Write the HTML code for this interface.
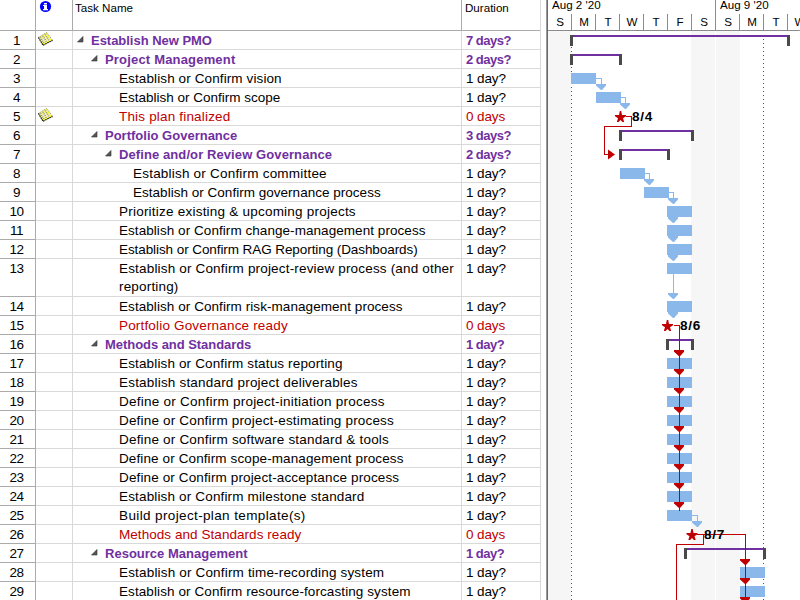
<!DOCTYPE html><html><head><meta charset="utf-8"><style>
html,body{margin:0;padding:0;width:800px;height:600px;overflow:hidden;background:#fff;}
body{position:relative;font-family:"Liberation Sans",sans-serif;color:#000;}
.a{position:absolute;}
.t{position:absolute;white-space:nowrap;font-size:13.5px;letter-spacing:0.2px;line-height:18px;}
.b{font-weight:bold;font-size:13.0px;letter-spacing:0.1px;color:#7030a0;}
.r{color:#c00000;}
</style></head><body>
<div class="a" style="left:0;top:30px;width:541px;height:1px;background:#ababab"></div>
<div class="a" style="left:0;top:49px;width:35px;height:1px;background:#ababab"></div>
<div class="a" style="left:36px;top:49px;width:505px;height:1px;background:#d9d9d9"></div>
<div class="a" style="left:0;top:68px;width:35px;height:1px;background:#ababab"></div>
<div class="a" style="left:36px;top:68px;width:505px;height:1px;background:#d9d9d9"></div>
<div class="a" style="left:0;top:87px;width:35px;height:1px;background:#ababab"></div>
<div class="a" style="left:36px;top:87px;width:505px;height:1px;background:#d9d9d9"></div>
<div class="a" style="left:0;top:106px;width:35px;height:1px;background:#ababab"></div>
<div class="a" style="left:36px;top:106px;width:505px;height:1px;background:#d9d9d9"></div>
<div class="a" style="left:0;top:125px;width:35px;height:1px;background:#ababab"></div>
<div class="a" style="left:36px;top:125px;width:505px;height:1px;background:#d9d9d9"></div>
<div class="a" style="left:0;top:144px;width:35px;height:1px;background:#ababab"></div>
<div class="a" style="left:36px;top:144px;width:505px;height:1px;background:#d9d9d9"></div>
<div class="a" style="left:0;top:163px;width:35px;height:1px;background:#ababab"></div>
<div class="a" style="left:36px;top:163px;width:505px;height:1px;background:#d9d9d9"></div>
<div class="a" style="left:0;top:182px;width:35px;height:1px;background:#ababab"></div>
<div class="a" style="left:36px;top:182px;width:505px;height:1px;background:#d9d9d9"></div>
<div class="a" style="left:0;top:201px;width:35px;height:1px;background:#ababab"></div>
<div class="a" style="left:36px;top:201px;width:505px;height:1px;background:#d9d9d9"></div>
<div class="a" style="left:0;top:220px;width:35px;height:1px;background:#ababab"></div>
<div class="a" style="left:36px;top:220px;width:505px;height:1px;background:#d9d9d9"></div>
<div class="a" style="left:0;top:239px;width:35px;height:1px;background:#ababab"></div>
<div class="a" style="left:36px;top:239px;width:505px;height:1px;background:#d9d9d9"></div>
<div class="a" style="left:0;top:258px;width:35px;height:1px;background:#ababab"></div>
<div class="a" style="left:36px;top:258px;width:505px;height:1px;background:#d9d9d9"></div>
<div class="a" style="left:0;top:296px;width:35px;height:1px;background:#ababab"></div>
<div class="a" style="left:36px;top:296px;width:505px;height:1px;background:#d9d9d9"></div>
<div class="a" style="left:0;top:315px;width:35px;height:1px;background:#ababab"></div>
<div class="a" style="left:36px;top:315px;width:505px;height:1px;background:#d9d9d9"></div>
<div class="a" style="left:0;top:334px;width:35px;height:1px;background:#ababab"></div>
<div class="a" style="left:36px;top:334px;width:505px;height:1px;background:#d9d9d9"></div>
<div class="a" style="left:0;top:353px;width:35px;height:1px;background:#ababab"></div>
<div class="a" style="left:36px;top:353px;width:505px;height:1px;background:#d9d9d9"></div>
<div class="a" style="left:0;top:372px;width:35px;height:1px;background:#ababab"></div>
<div class="a" style="left:36px;top:372px;width:505px;height:1px;background:#d9d9d9"></div>
<div class="a" style="left:0;top:391px;width:35px;height:1px;background:#ababab"></div>
<div class="a" style="left:36px;top:391px;width:505px;height:1px;background:#d9d9d9"></div>
<div class="a" style="left:0;top:410px;width:35px;height:1px;background:#ababab"></div>
<div class="a" style="left:36px;top:410px;width:505px;height:1px;background:#d9d9d9"></div>
<div class="a" style="left:0;top:429px;width:35px;height:1px;background:#ababab"></div>
<div class="a" style="left:36px;top:429px;width:505px;height:1px;background:#d9d9d9"></div>
<div class="a" style="left:0;top:448px;width:35px;height:1px;background:#ababab"></div>
<div class="a" style="left:36px;top:448px;width:505px;height:1px;background:#d9d9d9"></div>
<div class="a" style="left:0;top:467px;width:35px;height:1px;background:#ababab"></div>
<div class="a" style="left:36px;top:467px;width:505px;height:1px;background:#d9d9d9"></div>
<div class="a" style="left:0;top:486px;width:35px;height:1px;background:#ababab"></div>
<div class="a" style="left:36px;top:486px;width:505px;height:1px;background:#d9d9d9"></div>
<div class="a" style="left:0;top:505px;width:35px;height:1px;background:#ababab"></div>
<div class="a" style="left:36px;top:505px;width:505px;height:1px;background:#d9d9d9"></div>
<div class="a" style="left:0;top:524px;width:35px;height:1px;background:#ababab"></div>
<div class="a" style="left:36px;top:524px;width:505px;height:1px;background:#d9d9d9"></div>
<div class="a" style="left:0;top:543px;width:35px;height:1px;background:#ababab"></div>
<div class="a" style="left:36px;top:543px;width:505px;height:1px;background:#d9d9d9"></div>
<div class="a" style="left:0;top:562px;width:35px;height:1px;background:#ababab"></div>
<div class="a" style="left:36px;top:562px;width:505px;height:1px;background:#d9d9d9"></div>
<div class="a" style="left:0;top:581px;width:35px;height:1px;background:#ababab"></div>
<div class="a" style="left:36px;top:581px;width:505px;height:1px;background:#d9d9d9"></div>
<div class="a" style="left:0;top:600px;width:35px;height:1px;background:#ababab"></div>
<div class="a" style="left:36px;top:600px;width:505px;height:1px;background:#d9d9d9"></div>
<div class="a" style="left:35px;top:0;width:1px;height:600px;background:#ababab"></div>
<div class="a" style="left:72px;top:0;width:1px;height:30px;background:#ababab"></div>
<div class="a" style="left:72px;top:31px;width:1px;height:569px;background:#d9d9d9"></div>
<div class="a" style="left:461px;top:0;width:1px;height:30px;background:#ababab"></div>
<div class="a" style="left:461px;top:31px;width:1px;height:569px;background:#d9d9d9"></div>
<div class="a" style="left:540px;top:0;width:1px;height:600px;background:#d9d9d9"></div>
<div class="a" style="left:546px;top:0;width:1px;height:600px;background:#9a9a9a"></div><div class="a" style="left:547px;top:0;width:1px;height:600px;background:#6a6a6a"></div>
<div class="t" style="left:75px;top:-1px;font-size:11.6px;letter-spacing:0">Task Name</div>
<div class="t" style="left:465px;top:-1px;font-size:11.6px;letter-spacing:0">Duration</div>
<svg class="a" style="left:38px;top:0" width="16" height="14" viewBox="0 0 16 14"><circle cx="7.5" cy="6.5" r="5.6" fill="#0000ff"/><rect x="6" y="3" width="3" height="1.5" fill="#fff"/><rect x="6" y="5" width="3" height="4.5" fill="#fff"/><rect x="5" y="5" width="1" height="1" fill="#fff"/><rect x="5" y="9" width="5" height="1.3" fill="#fff"/></svg>
<div class="t" style="left:-1px;width:35px;text-align:center;top:32px;letter-spacing:-0.6px">1</div>
<svg class="a" style="left:36px;top:32px" width="20" height="18" viewBox="0 0 20 18"><g transform="matrix(8.400,-4.900,4.600,7.800,2.4,5.4)"><rect x="0" y="0" width="1" height="1" fill="#ffff00"/><rect x="0.060" y="0.070" width="0.26" height="0.17" fill="#ffffff"/><rect x="0.100" y="0.100" width="0.18" height="0.11" fill="#8c8c8c"/><rect x="0.060" y="0.285" width="0.26" height="0.17" fill="#ffffff"/><rect x="0.100" y="0.315" width="0.18" height="0.11" fill="#8c8c8c"/><rect x="0.060" y="0.500" width="0.26" height="0.17" fill="#ffffff"/><rect x="0.100" y="0.530" width="0.18" height="0.11" fill="#8c8c8c"/><rect x="0.060" y="0.715" width="0.26" height="0.17" fill="#ffffff"/><rect x="0.100" y="0.745" width="0.18" height="0.11" fill="#8c8c8c"/><rect x="0.350" y="0.070" width="0.26" height="0.17" fill="#ffffff"/><rect x="0.390" y="0.100" width="0.18" height="0.11" fill="#8c8c8c"/><rect x="0.350" y="0.285" width="0.26" height="0.17" fill="#ffffff"/><rect x="0.390" y="0.315" width="0.18" height="0.11" fill="#8c8c8c"/><rect x="0.350" y="0.500" width="0.26" height="0.17" fill="#ffffff"/><rect x="0.390" y="0.530" width="0.18" height="0.11" fill="#8c8c8c"/><rect x="0.350" y="0.715" width="0.26" height="0.17" fill="#ffffff"/><rect x="0.390" y="0.745" width="0.18" height="0.11" fill="#8c8c8c"/><rect x="0.640" y="0.070" width="0.26" height="0.17" fill="#ffffff"/><rect x="0.680" y="0.100" width="0.18" height="0.11" fill="#8c8c8c"/><rect x="0.640" y="0.285" width="0.26" height="0.17" fill="#ffffff"/><rect x="0.680" y="0.315" width="0.18" height="0.11" fill="#8c8c8c"/><rect x="0.640" y="0.500" width="0.26" height="0.17" fill="#ffffff"/><rect x="0.680" y="0.530" width="0.18" height="0.11" fill="#8c8c8c"/><rect x="0.640" y="0.715" width="0.26" height="0.17" fill="#ffffff"/><rect x="0.680" y="0.745" width="0.18" height="0.11" fill="#8c8c8c"/></g><polyline points="2.4,5.4 7.0,13.2 16.6,8.4" fill="none" stroke="#000" stroke-width="1.1" stroke-dasharray="1.6 0.7"/><polyline points="2.4,5.4 10.8,0.5 16.6,8.4" fill="none" stroke="#777" stroke-width="0.8" stroke-dasharray="1.3 0.9"/></svg>
<svg class="a" style="left:77px;top:35.5px" width="7" height="7" viewBox="0 0 7 7"><polygon points="6,0.5 6,6 0.5,6" fill="#555" stroke="#333" stroke-width="0.6"/></svg>
<div class="t b" style="left:91px;top:32px;letter-spacing:-0.025px">Establish New PMO</div>
<div class="t b" style="left:466px;top:32px;letter-spacing:-0.5px">7 days?</div>
<div class="t" style="left:-1px;width:35px;text-align:center;top:51px;letter-spacing:-0.6px">2</div>
<svg class="a" style="left:91px;top:54.5px" width="7" height="7" viewBox="0 0 7 7"><polygon points="6,0.5 6,6 0.5,6" fill="#555" stroke="#333" stroke-width="0.6"/></svg>
<div class="t b" style="left:105px;top:51px;letter-spacing:0.182px">Project Management</div>
<div class="t b" style="left:466px;top:51px;letter-spacing:-0.5px">2 days?</div>
<div class="t" style="left:-1px;width:35px;text-align:center;top:70px;letter-spacing:-0.6px">3</div>
<div class="t" style="left:119px;top:70px;letter-spacing:0.108px">Establish or Confirm vision</div>
<div class="t" style="left:466px;top:70px;letter-spacing:-0.1px">1 day?</div>
<div class="t" style="left:-1px;width:35px;text-align:center;top:89px;letter-spacing:-0.6px">4</div>
<div class="t" style="left:119px;top:89px;letter-spacing:-0.004px">Establish or Confirm scope</div>
<div class="t" style="left:466px;top:89px;letter-spacing:-0.1px">1 day?</div>
<div class="t" style="left:-1px;width:35px;text-align:center;top:108px;letter-spacing:-0.6px">5</div>
<svg class="a" style="left:36px;top:108px" width="20" height="18" viewBox="0 0 20 18"><g transform="matrix(8.400,-4.900,4.600,7.800,2.4,5.4)"><rect x="0" y="0" width="1" height="1" fill="#ffff00"/><rect x="0.060" y="0.070" width="0.26" height="0.17" fill="#ffffff"/><rect x="0.100" y="0.100" width="0.18" height="0.11" fill="#8c8c8c"/><rect x="0.060" y="0.285" width="0.26" height="0.17" fill="#ffffff"/><rect x="0.100" y="0.315" width="0.18" height="0.11" fill="#8c8c8c"/><rect x="0.060" y="0.500" width="0.26" height="0.17" fill="#ffffff"/><rect x="0.100" y="0.530" width="0.18" height="0.11" fill="#8c8c8c"/><rect x="0.060" y="0.715" width="0.26" height="0.17" fill="#ffffff"/><rect x="0.100" y="0.745" width="0.18" height="0.11" fill="#8c8c8c"/><rect x="0.350" y="0.070" width="0.26" height="0.17" fill="#ffffff"/><rect x="0.390" y="0.100" width="0.18" height="0.11" fill="#8c8c8c"/><rect x="0.350" y="0.285" width="0.26" height="0.17" fill="#ffffff"/><rect x="0.390" y="0.315" width="0.18" height="0.11" fill="#8c8c8c"/><rect x="0.350" y="0.500" width="0.26" height="0.17" fill="#ffffff"/><rect x="0.390" y="0.530" width="0.18" height="0.11" fill="#8c8c8c"/><rect x="0.350" y="0.715" width="0.26" height="0.17" fill="#ffffff"/><rect x="0.390" y="0.745" width="0.18" height="0.11" fill="#8c8c8c"/><rect x="0.640" y="0.070" width="0.26" height="0.17" fill="#ffffff"/><rect x="0.680" y="0.100" width="0.18" height="0.11" fill="#8c8c8c"/><rect x="0.640" y="0.285" width="0.26" height="0.17" fill="#ffffff"/><rect x="0.680" y="0.315" width="0.18" height="0.11" fill="#8c8c8c"/><rect x="0.640" y="0.500" width="0.26" height="0.17" fill="#ffffff"/><rect x="0.680" y="0.530" width="0.18" height="0.11" fill="#8c8c8c"/><rect x="0.640" y="0.715" width="0.26" height="0.17" fill="#ffffff"/><rect x="0.680" y="0.745" width="0.18" height="0.11" fill="#8c8c8c"/></g><polyline points="2.4,5.4 7.0,13.2 16.6,8.4" fill="none" stroke="#000" stroke-width="1.1" stroke-dasharray="1.6 0.7"/><polyline points="2.4,5.4 10.8,0.5 16.6,8.4" fill="none" stroke="#777" stroke-width="0.8" stroke-dasharray="1.3 0.9"/></svg>
<div class="t r" style="left:119px;top:108px;letter-spacing:0.178px">This plan finalized</div>
<div class="t r" style="left:466px;top:108px;letter-spacing:-0.1px">0 days</div>
<div class="t" style="left:-1px;width:35px;text-align:center;top:127px;letter-spacing:-0.6px">6</div>
<svg class="a" style="left:91px;top:130.5px" width="7" height="7" viewBox="0 0 7 7"><polygon points="6,0.5 6,6 0.5,6" fill="#555" stroke="#333" stroke-width="0.6"/></svg>
<div class="t b" style="left:105px;top:127px;letter-spacing:0.005px">Portfolio Governance</div>
<div class="t b" style="left:466px;top:127px;letter-spacing:-0.5px">3 days?</div>
<div class="t" style="left:-1px;width:35px;text-align:center;top:146px;letter-spacing:-0.6px">7</div>
<svg class="a" style="left:105px;top:149.5px" width="7" height="7" viewBox="0 0 7 7"><polygon points="6,0.5 6,6 0.5,6" fill="#555" stroke="#333" stroke-width="0.6"/></svg>
<div class="t b" style="left:119px;top:146px;letter-spacing:0.094px">Define and/or Review Governance</div>
<div class="t b" style="left:466px;top:146px;letter-spacing:-0.5px">2 days?</div>
<div class="t" style="left:-1px;width:35px;text-align:center;top:165px;letter-spacing:-0.6px">8</div>
<div class="t" style="left:133px;top:165px;letter-spacing:0.209px">Establish or Confirm committee</div>
<div class="t" style="left:466px;top:165px;letter-spacing:-0.1px">1 day?</div>
<div class="t" style="left:-1px;width:35px;text-align:center;top:184px;letter-spacing:-0.6px">9</div>
<div class="t" style="left:133px;top:184px;letter-spacing:0.021px">Establish or Confirm governance process</div>
<div class="t" style="left:466px;top:184px;letter-spacing:-0.1px">1 day?</div>
<div class="t" style="left:-1px;width:35px;text-align:center;top:203px;letter-spacing:-0.6px">10</div>
<div class="t" style="left:119px;top:203px;letter-spacing:0.224px">Prioritize existing &amp; upcoming projects</div>
<div class="t" style="left:466px;top:203px;letter-spacing:-0.1px">1 day?</div>
<div class="t" style="left:-1px;width:35px;text-align:center;top:222px;letter-spacing:-0.6px">11</div>
<div class="t" style="left:119px;top:222px;letter-spacing:0.057px">Establish or Confirm change-management process</div>
<div class="t" style="left:466px;top:222px;letter-spacing:-0.1px">1 day?</div>
<div class="t" style="left:-1px;width:35px;text-align:center;top:241px;letter-spacing:-0.6px">12</div>
<div class="t" style="left:119px;top:241px;letter-spacing:-0.081px">Establish or Confirm RAG Reporting (Dashboards)</div>
<div class="t" style="left:466px;top:241px;letter-spacing:-0.1px">1 day?</div>
<div class="t" style="left:-1px;width:35px;text-align:center;top:260px;letter-spacing:-0.6px">13</div>
<div class="t" style="left:119px;top:260px;letter-spacing:0.172px">Establish or Confirm project-review process (and other<br>reporting)</div>
<div class="t" style="left:466px;top:260px;letter-spacing:-0.1px">1 day?</div>
<div class="t" style="left:-1px;width:35px;text-align:center;top:298px;letter-spacing:-0.6px">14</div>
<div class="t" style="left:119px;top:298px;letter-spacing:0.067px">Establish or Confirm risk-management process</div>
<div class="t" style="left:466px;top:298px;letter-spacing:-0.1px">1 day?</div>
<div class="t" style="left:-1px;width:35px;text-align:center;top:317px;letter-spacing:-0.6px">15</div>
<div class="t r" style="left:119px;top:317px;letter-spacing:0.172px">Portfolio Governance ready</div>
<div class="t r" style="left:466px;top:317px;letter-spacing:-0.1px">0 days</div>
<div class="t" style="left:-1px;width:35px;text-align:center;top:336px;letter-spacing:-0.6px">16</div>
<svg class="a" style="left:91px;top:339.5px" width="7" height="7" viewBox="0 0 7 7"><polygon points="6,0.5 6,6 0.5,6" fill="#555" stroke="#333" stroke-width="0.6"/></svg>
<div class="t b" style="left:105px;top:336px;letter-spacing:-0.050px">Methods and Standards</div>
<div class="t b" style="left:466px;top:336px;letter-spacing:-0.5px">1 day?</div>
<div class="t" style="left:-1px;width:35px;text-align:center;top:355px;letter-spacing:-0.6px">17</div>
<div class="t" style="left:119px;top:355px;letter-spacing:0.144px">Establish or Confirm status reporting</div>
<div class="t" style="left:466px;top:355px;letter-spacing:-0.1px">1 day?</div>
<div class="t" style="left:-1px;width:35px;text-align:center;top:374px;letter-spacing:-0.6px">18</div>
<div class="t" style="left:119px;top:374px;letter-spacing:0.194px">Establish standard project deliverables</div>
<div class="t" style="left:466px;top:374px;letter-spacing:-0.1px">1 day?</div>
<div class="t" style="left:-1px;width:35px;text-align:center;top:393px;letter-spacing:-0.6px">19</div>
<div class="t" style="left:119px;top:393px;letter-spacing:0.242px">Define or Confirm project-initiation process</div>
<div class="t" style="left:466px;top:393px;letter-spacing:-0.1px">1 day?</div>
<div class="t" style="left:-1px;width:35px;text-align:center;top:412px;letter-spacing:-0.6px">20</div>
<div class="t" style="left:119px;top:412px;letter-spacing:0.179px">Define or Confirm project-estimating process</div>
<div class="t" style="left:466px;top:412px;letter-spacing:-0.1px">1 day?</div>
<div class="t" style="left:-1px;width:35px;text-align:center;top:431px;letter-spacing:-0.6px">21</div>
<div class="t" style="left:119px;top:431px;letter-spacing:0.188px">Define or Confirm software standard &amp; tools</div>
<div class="t" style="left:466px;top:431px;letter-spacing:-0.1px">1 day?</div>
<div class="t" style="left:-1px;width:35px;text-align:center;top:450px;letter-spacing:-0.6px">22</div>
<div class="t" style="left:119px;top:450px;letter-spacing:0.112px">Define or Confirm scope-management process</div>
<div class="t" style="left:466px;top:450px;letter-spacing:-0.1px">1 day?</div>
<div class="t" style="left:-1px;width:35px;text-align:center;top:469px;letter-spacing:-0.6px">23</div>
<div class="t" style="left:119px;top:469px;letter-spacing:0.126px">Define or Confirm project-acceptance process</div>
<div class="t" style="left:466px;top:469px;letter-spacing:-0.1px">1 day?</div>
<div class="t" style="left:-1px;width:35px;text-align:center;top:488px;letter-spacing:-0.6px">24</div>
<div class="t" style="left:119px;top:488px;letter-spacing:0.156px">Establish or Confirm milestone standard</div>
<div class="t" style="left:466px;top:488px;letter-spacing:-0.1px">1 day?</div>
<div class="t" style="left:-1px;width:35px;text-align:center;top:507px;letter-spacing:-0.6px">25</div>
<div class="t" style="left:119px;top:507px;letter-spacing:0.372px">Build project-plan template(s)</div>
<div class="t" style="left:466px;top:507px;letter-spacing:-0.1px">1 day?</div>
<div class="t" style="left:-1px;width:35px;text-align:center;top:526px;letter-spacing:-0.6px">26</div>
<div class="t r" style="left:119px;top:526px;letter-spacing:0.054px">Methods and Standards ready</div>
<div class="t r" style="left:466px;top:526px;letter-spacing:-0.1px">0 days</div>
<div class="t" style="left:-1px;width:35px;text-align:center;top:545px;letter-spacing:-0.6px">27</div>
<svg class="a" style="left:91px;top:548.5px" width="7" height="7" viewBox="0 0 7 7"><polygon points="6,0.5 6,6 0.5,6" fill="#555" stroke="#333" stroke-width="0.6"/></svg>
<div class="t b" style="left:105px;top:545px;letter-spacing:0.011px">Resource Management</div>
<div class="t b" style="left:466px;top:545px;letter-spacing:-0.5px">1 day?</div>
<div class="t" style="left:-1px;width:35px;text-align:center;top:564px;letter-spacing:-0.6px">28</div>
<div class="t" style="left:119px;top:564px;letter-spacing:0.171px">Establish or Confirm time-recording system</div>
<div class="t" style="left:466px;top:564px;letter-spacing:-0.1px">1 day?</div>
<div class="t" style="left:-1px;width:35px;text-align:center;top:583px;letter-spacing:-0.6px">29</div>
<div class="t" style="left:119px;top:583px;letter-spacing:0.090px">Establish or Confirm resource-forcasting system</div>
<div class="t" style="left:466px;top:583px;letter-spacing:-0.1px">1 day?</div>
<svg class="a" style="left:548px;top:0" width="252" height="600" viewBox="548 0 252 600" shape-rendering="crispEdges"><rect x="548" y="31" width="23" height="569" fill="#f6f6f6"/><rect x="691" y="31" width="24" height="569" fill="#f6f6f6"/><rect x="716" y="31" width="24" height="569" fill="#f6f6f6"/><rect x="548" y="30" width="252" height="1" fill="#8c8c8c"/><rect x="571" y="14" width="1" height="16" fill="#8c8c8c"/><rect x="595" y="14" width="1" height="16" fill="#8c8c8c"/><rect x="619" y="14" width="1" height="16" fill="#8c8c8c"/><rect x="643" y="14" width="1" height="16" fill="#8c8c8c"/><rect x="667" y="14" width="1" height="16" fill="#8c8c8c"/><rect x="691" y="14" width="1" height="16" fill="#8c8c8c"/><rect x="715" y="0" width="1" height="30" fill="#8c8c8c"/><rect x="739" y="14" width="1" height="16" fill="#8c8c8c"/><rect x="763" y="14" width="1" height="16" fill="#8c8c8c"/><rect x="787" y="14" width="1" height="16" fill="#8c8c8c"/></svg>
<div class="t" style="left:552px;top:-4px;font-size:11.6px;letter-spacing:0">Aug 2 '20</div>
<div class="t" style="left:720px;top:-4px;font-size:11.6px;letter-spacing:0">Aug 9 '20</div>
<div class="t" style="left:548px;width:24px;text-align:center;top:13px;font-size:11.6px;letter-spacing:0">S</div>
<div class="t" style="left:572px;width:24px;text-align:center;top:13px;font-size:11.6px;letter-spacing:0">M</div>
<div class="t" style="left:596px;width:24px;text-align:center;top:13px;font-size:11.6px;letter-spacing:0">T</div>
<div class="t" style="left:620px;width:24px;text-align:center;top:13px;font-size:11.6px;letter-spacing:0">W</div>
<div class="t" style="left:644px;width:24px;text-align:center;top:13px;font-size:11.6px;letter-spacing:0">T</div>
<div class="t" style="left:668px;width:24px;text-align:center;top:13px;font-size:11.6px;letter-spacing:0">F</div>
<div class="t" style="left:692px;width:24px;text-align:center;top:13px;font-size:11.6px;letter-spacing:0">S</div>
<div class="t" style="left:716px;width:24px;text-align:center;top:13px;font-size:11.6px;letter-spacing:0">S</div>
<div class="t" style="left:740px;width:24px;text-align:center;top:13px;font-size:11.6px;letter-spacing:0">M</div>
<div class="t" style="left:764px;width:24px;text-align:center;top:13px;font-size:11.6px;letter-spacing:0">T</div>
<div class="t" style="left:788px;width:24px;text-align:center;top:13px;font-size:11.6px;letter-spacing:0">W</div>
<svg class="a" style="left:548px;top:31px" width="252" height="569" viewBox="548 31 252 569" shape-rendering="crispEdges"><rect x="571" y="35" width="1" height="1" fill="#555"/><rect x="571" y="39" width="1" height="1" fill="#555"/><rect x="571" y="43" width="1" height="1" fill="#555"/><rect x="571" y="47" width="1" height="1" fill="#555"/><rect x="571" y="51" width="1" height="1" fill="#555"/><rect x="571" y="55" width="1" height="1" fill="#555"/><rect x="571" y="59" width="1" height="1" fill="#555"/><rect x="571" y="63" width="1" height="1" fill="#555"/><rect x="571" y="67" width="1" height="1" fill="#555"/><rect x="571" y="71" width="1" height="1" fill="#555"/><rect x="571" y="75" width="1" height="1" fill="#555"/><rect x="571" y="79" width="1" height="1" fill="#555"/><rect x="571" y="83" width="1" height="1" fill="#555"/><rect x="571" y="87" width="1" height="1" fill="#555"/><rect x="571" y="91" width="1" height="1" fill="#555"/><rect x="571" y="95" width="1" height="1" fill="#555"/><rect x="571" y="99" width="1" height="1" fill="#555"/><rect x="571" y="103" width="1" height="1" fill="#555"/><rect x="571" y="107" width="1" height="1" fill="#555"/><rect x="571" y="111" width="1" height="1" fill="#555"/><rect x="571" y="115" width="1" height="1" fill="#555"/><rect x="571" y="119" width="1" height="1" fill="#555"/><rect x="571" y="123" width="1" height="1" fill="#555"/><rect x="571" y="127" width="1" height="1" fill="#555"/><rect x="571" y="131" width="1" height="1" fill="#555"/><rect x="571" y="135" width="1" height="1" fill="#555"/><rect x="571" y="139" width="1" height="1" fill="#555"/><rect x="571" y="143" width="1" height="1" fill="#555"/><rect x="571" y="147" width="1" height="1" fill="#555"/><rect x="571" y="151" width="1" height="1" fill="#555"/><rect x="571" y="155" width="1" height="1" fill="#555"/><rect x="571" y="159" width="1" height="1" fill="#555"/><rect x="571" y="163" width="1" height="1" fill="#555"/><rect x="571" y="167" width="1" height="1" fill="#555"/><rect x="571" y="171" width="1" height="1" fill="#555"/><rect x="571" y="175" width="1" height="1" fill="#555"/><rect x="571" y="179" width="1" height="1" fill="#555"/><rect x="571" y="183" width="1" height="1" fill="#555"/><rect x="571" y="187" width="1" height="1" fill="#555"/><rect x="571" y="191" width="1" height="1" fill="#555"/><rect x="571" y="195" width="1" height="1" fill="#555"/><rect x="571" y="199" width="1" height="1" fill="#555"/><rect x="571" y="203" width="1" height="1" fill="#555"/><rect x="571" y="207" width="1" height="1" fill="#555"/><rect x="571" y="211" width="1" height="1" fill="#555"/><rect x="571" y="215" width="1" height="1" fill="#555"/><rect x="571" y="219" width="1" height="1" fill="#555"/><rect x="571" y="223" width="1" height="1" fill="#555"/><rect x="571" y="227" width="1" height="1" fill="#555"/><rect x="571" y="231" width="1" height="1" fill="#555"/><rect x="571" y="235" width="1" height="1" fill="#555"/><rect x="571" y="239" width="1" height="1" fill="#555"/><rect x="571" y="243" width="1" height="1" fill="#555"/><rect x="571" y="247" width="1" height="1" fill="#555"/><rect x="571" y="251" width="1" height="1" fill="#555"/><rect x="571" y="255" width="1" height="1" fill="#555"/><rect x="571" y="259" width="1" height="1" fill="#555"/><rect x="571" y="263" width="1" height="1" fill="#555"/><rect x="571" y="267" width="1" height="1" fill="#555"/><rect x="571" y="271" width="1" height="1" fill="#555"/><rect x="571" y="275" width="1" height="1" fill="#555"/><rect x="571" y="279" width="1" height="1" fill="#555"/><rect x="571" y="283" width="1" height="1" fill="#555"/><rect x="571" y="287" width="1" height="1" fill="#555"/><rect x="571" y="291" width="1" height="1" fill="#555"/><rect x="571" y="295" width="1" height="1" fill="#555"/><rect x="571" y="299" width="1" height="1" fill="#555"/><rect x="571" y="303" width="1" height="1" fill="#555"/><rect x="571" y="307" width="1" height="1" fill="#555"/><rect x="571" y="311" width="1" height="1" fill="#555"/><rect x="571" y="315" width="1" height="1" fill="#555"/><rect x="571" y="319" width="1" height="1" fill="#555"/><rect x="571" y="323" width="1" height="1" fill="#555"/><rect x="571" y="327" width="1" height="1" fill="#555"/><rect x="571" y="331" width="1" height="1" fill="#555"/><rect x="571" y="335" width="1" height="1" fill="#555"/><rect x="571" y="339" width="1" height="1" fill="#555"/><rect x="571" y="343" width="1" height="1" fill="#555"/><rect x="571" y="347" width="1" height="1" fill="#555"/><rect x="571" y="351" width="1" height="1" fill="#555"/><rect x="571" y="355" width="1" height="1" fill="#555"/><rect x="571" y="359" width="1" height="1" fill="#555"/><rect x="571" y="363" width="1" height="1" fill="#555"/><rect x="571" y="367" width="1" height="1" fill="#555"/><rect x="571" y="371" width="1" height="1" fill="#555"/><rect x="571" y="375" width="1" height="1" fill="#555"/><rect x="571" y="379" width="1" height="1" fill="#555"/><rect x="571" y="383" width="1" height="1" fill="#555"/><rect x="571" y="387" width="1" height="1" fill="#555"/><rect x="571" y="391" width="1" height="1" fill="#555"/><rect x="571" y="395" width="1" height="1" fill="#555"/><rect x="571" y="399" width="1" height="1" fill="#555"/><rect x="571" y="403" width="1" height="1" fill="#555"/><rect x="571" y="407" width="1" height="1" fill="#555"/><rect x="571" y="411" width="1" height="1" fill="#555"/><rect x="571" y="415" width="1" height="1" fill="#555"/><rect x="571" y="419" width="1" height="1" fill="#555"/><rect x="571" y="423" width="1" height="1" fill="#555"/><rect x="571" y="427" width="1" height="1" fill="#555"/><rect x="571" y="431" width="1" height="1" fill="#555"/><rect x="571" y="435" width="1" height="1" fill="#555"/><rect x="571" y="439" width="1" height="1" fill="#555"/><rect x="571" y="443" width="1" height="1" fill="#555"/><rect x="571" y="447" width="1" height="1" fill="#555"/><rect x="571" y="451" width="1" height="1" fill="#555"/><rect x="571" y="455" width="1" height="1" fill="#555"/><rect x="571" y="459" width="1" height="1" fill="#555"/><rect x="571" y="463" width="1" height="1" fill="#555"/><rect x="571" y="467" width="1" height="1" fill="#555"/><rect x="571" y="471" width="1" height="1" fill="#555"/><rect x="571" y="475" width="1" height="1" fill="#555"/><rect x="571" y="479" width="1" height="1" fill="#555"/><rect x="571" y="483" width="1" height="1" fill="#555"/><rect x="571" y="487" width="1" height="1" fill="#555"/><rect x="571" y="491" width="1" height="1" fill="#555"/><rect x="571" y="495" width="1" height="1" fill="#555"/><rect x="571" y="499" width="1" height="1" fill="#555"/><rect x="571" y="503" width="1" height="1" fill="#555"/><rect x="571" y="507" width="1" height="1" fill="#555"/><rect x="571" y="511" width="1" height="1" fill="#555"/><rect x="571" y="515" width="1" height="1" fill="#555"/><rect x="571" y="519" width="1" height="1" fill="#555"/><rect x="571" y="523" width="1" height="1" fill="#555"/><rect x="571" y="527" width="1" height="1" fill="#555"/><rect x="571" y="531" width="1" height="1" fill="#555"/><rect x="571" y="535" width="1" height="1" fill="#555"/><rect x="571" y="539" width="1" height="1" fill="#555"/><rect x="571" y="543" width="1" height="1" fill="#555"/><rect x="571" y="547" width="1" height="1" fill="#555"/><rect x="571" y="551" width="1" height="1" fill="#555"/><rect x="571" y="555" width="1" height="1" fill="#555"/><rect x="571" y="559" width="1" height="1" fill="#555"/><rect x="571" y="563" width="1" height="1" fill="#555"/><rect x="571" y="567" width="1" height="1" fill="#555"/><rect x="571" y="571" width="1" height="1" fill="#555"/><rect x="571" y="575" width="1" height="1" fill="#555"/><rect x="571" y="579" width="1" height="1" fill="#555"/><rect x="571" y="583" width="1" height="1" fill="#555"/><rect x="571" y="587" width="1" height="1" fill="#555"/><rect x="571" y="591" width="1" height="1" fill="#555"/><rect x="571" y="595" width="1" height="1" fill="#555"/><rect x="571" y="599" width="1" height="1" fill="#555"/><rect x="763" y="35" width="1" height="1" fill="#555"/><rect x="763" y="39" width="1" height="1" fill="#555"/><rect x="763" y="43" width="1" height="1" fill="#555"/><rect x="763" y="47" width="1" height="1" fill="#555"/><rect x="763" y="51" width="1" height="1" fill="#555"/><rect x="763" y="55" width="1" height="1" fill="#555"/><rect x="763" y="59" width="1" height="1" fill="#555"/><rect x="763" y="63" width="1" height="1" fill="#555"/><rect x="763" y="67" width="1" height="1" fill="#555"/><rect x="763" y="71" width="1" height="1" fill="#555"/><rect x="763" y="75" width="1" height="1" fill="#555"/><rect x="763" y="79" width="1" height="1" fill="#555"/><rect x="763" y="83" width="1" height="1" fill="#555"/><rect x="763" y="87" width="1" height="1" fill="#555"/><rect x="763" y="91" width="1" height="1" fill="#555"/><rect x="763" y="95" width="1" height="1" fill="#555"/><rect x="763" y="99" width="1" height="1" fill="#555"/><rect x="763" y="103" width="1" height="1" fill="#555"/><rect x="763" y="107" width="1" height="1" fill="#555"/><rect x="763" y="111" width="1" height="1" fill="#555"/><rect x="763" y="115" width="1" height="1" fill="#555"/><rect x="763" y="119" width="1" height="1" fill="#555"/><rect x="763" y="123" width="1" height="1" fill="#555"/><rect x="763" y="127" width="1" height="1" fill="#555"/><rect x="763" y="131" width="1" height="1" fill="#555"/><rect x="763" y="135" width="1" height="1" fill="#555"/><rect x="763" y="139" width="1" height="1" fill="#555"/><rect x="763" y="143" width="1" height="1" fill="#555"/><rect x="763" y="147" width="1" height="1" fill="#555"/><rect x="763" y="151" width="1" height="1" fill="#555"/><rect x="763" y="155" width="1" height="1" fill="#555"/><rect x="763" y="159" width="1" height="1" fill="#555"/><rect x="763" y="163" width="1" height="1" fill="#555"/><rect x="763" y="167" width="1" height="1" fill="#555"/><rect x="763" y="171" width="1" height="1" fill="#555"/><rect x="763" y="175" width="1" height="1" fill="#555"/><rect x="763" y="179" width="1" height="1" fill="#555"/><rect x="763" y="183" width="1" height="1" fill="#555"/><rect x="763" y="187" width="1" height="1" fill="#555"/><rect x="763" y="191" width="1" height="1" fill="#555"/><rect x="763" y="195" width="1" height="1" fill="#555"/><rect x="763" y="199" width="1" height="1" fill="#555"/><rect x="763" y="203" width="1" height="1" fill="#555"/><rect x="763" y="207" width="1" height="1" fill="#555"/><rect x="763" y="211" width="1" height="1" fill="#555"/><rect x="763" y="215" width="1" height="1" fill="#555"/><rect x="763" y="219" width="1" height="1" fill="#555"/><rect x="763" y="223" width="1" height="1" fill="#555"/><rect x="763" y="227" width="1" height="1" fill="#555"/><rect x="763" y="231" width="1" height="1" fill="#555"/><rect x="763" y="235" width="1" height="1" fill="#555"/><rect x="763" y="239" width="1" height="1" fill="#555"/><rect x="763" y="243" width="1" height="1" fill="#555"/><rect x="763" y="247" width="1" height="1" fill="#555"/><rect x="763" y="251" width="1" height="1" fill="#555"/><rect x="763" y="255" width="1" height="1" fill="#555"/><rect x="763" y="259" width="1" height="1" fill="#555"/><rect x="763" y="263" width="1" height="1" fill="#555"/><rect x="763" y="267" width="1" height="1" fill="#555"/><rect x="763" y="271" width="1" height="1" fill="#555"/><rect x="763" y="275" width="1" height="1" fill="#555"/><rect x="763" y="279" width="1" height="1" fill="#555"/><rect x="763" y="283" width="1" height="1" fill="#555"/><rect x="763" y="287" width="1" height="1" fill="#555"/><rect x="763" y="291" width="1" height="1" fill="#555"/><rect x="763" y="295" width="1" height="1" fill="#555"/><rect x="763" y="299" width="1" height="1" fill="#555"/><rect x="763" y="303" width="1" height="1" fill="#555"/><rect x="763" y="307" width="1" height="1" fill="#555"/><rect x="763" y="311" width="1" height="1" fill="#555"/><rect x="763" y="315" width="1" height="1" fill="#555"/><rect x="763" y="319" width="1" height="1" fill="#555"/><rect x="763" y="323" width="1" height="1" fill="#555"/><rect x="763" y="327" width="1" height="1" fill="#555"/><rect x="763" y="331" width="1" height="1" fill="#555"/><rect x="763" y="335" width="1" height="1" fill="#555"/><rect x="763" y="339" width="1" height="1" fill="#555"/><rect x="763" y="343" width="1" height="1" fill="#555"/><rect x="763" y="347" width="1" height="1" fill="#555"/><rect x="763" y="351" width="1" height="1" fill="#555"/><rect x="763" y="355" width="1" height="1" fill="#555"/><rect x="763" y="359" width="1" height="1" fill="#555"/><rect x="763" y="363" width="1" height="1" fill="#555"/><rect x="763" y="367" width="1" height="1" fill="#555"/><rect x="763" y="371" width="1" height="1" fill="#555"/><rect x="763" y="375" width="1" height="1" fill="#555"/><rect x="763" y="379" width="1" height="1" fill="#555"/><rect x="763" y="383" width="1" height="1" fill="#555"/><rect x="763" y="387" width="1" height="1" fill="#555"/><rect x="763" y="391" width="1" height="1" fill="#555"/><rect x="763" y="395" width="1" height="1" fill="#555"/><rect x="763" y="399" width="1" height="1" fill="#555"/><rect x="763" y="403" width="1" height="1" fill="#555"/><rect x="763" y="407" width="1" height="1" fill="#555"/><rect x="763" y="411" width="1" height="1" fill="#555"/><rect x="763" y="415" width="1" height="1" fill="#555"/><rect x="763" y="419" width="1" height="1" fill="#555"/><rect x="763" y="423" width="1" height="1" fill="#555"/><rect x="763" y="427" width="1" height="1" fill="#555"/><rect x="763" y="431" width="1" height="1" fill="#555"/><rect x="763" y="435" width="1" height="1" fill="#555"/><rect x="763" y="439" width="1" height="1" fill="#555"/><rect x="763" y="443" width="1" height="1" fill="#555"/><rect x="763" y="447" width="1" height="1" fill="#555"/><rect x="763" y="451" width="1" height="1" fill="#555"/><rect x="763" y="455" width="1" height="1" fill="#555"/><rect x="763" y="459" width="1" height="1" fill="#555"/><rect x="763" y="463" width="1" height="1" fill="#555"/><rect x="763" y="467" width="1" height="1" fill="#555"/><rect x="763" y="471" width="1" height="1" fill="#555"/><rect x="763" y="475" width="1" height="1" fill="#555"/><rect x="763" y="479" width="1" height="1" fill="#555"/><rect x="763" y="483" width="1" height="1" fill="#555"/><rect x="763" y="487" width="1" height="1" fill="#555"/><rect x="763" y="491" width="1" height="1" fill="#555"/><rect x="763" y="495" width="1" height="1" fill="#555"/><rect x="763" y="499" width="1" height="1" fill="#555"/><rect x="763" y="503" width="1" height="1" fill="#555"/><rect x="763" y="507" width="1" height="1" fill="#555"/><rect x="763" y="511" width="1" height="1" fill="#555"/><rect x="763" y="515" width="1" height="1" fill="#555"/><rect x="763" y="519" width="1" height="1" fill="#555"/><rect x="763" y="523" width="1" height="1" fill="#555"/><rect x="763" y="527" width="1" height="1" fill="#555"/><rect x="763" y="531" width="1" height="1" fill="#555"/><rect x="763" y="535" width="1" height="1" fill="#555"/><rect x="763" y="539" width="1" height="1" fill="#555"/><rect x="763" y="543" width="1" height="1" fill="#555"/><rect x="763" y="547" width="1" height="1" fill="#555"/><rect x="763" y="551" width="1" height="1" fill="#555"/><rect x="763" y="555" width="1" height="1" fill="#555"/><rect x="763" y="559" width="1" height="1" fill="#555"/><rect x="763" y="563" width="1" height="1" fill="#555"/><rect x="763" y="567" width="1" height="1" fill="#555"/><rect x="763" y="571" width="1" height="1" fill="#555"/><rect x="763" y="575" width="1" height="1" fill="#555"/><rect x="763" y="579" width="1" height="1" fill="#555"/><rect x="763" y="583" width="1" height="1" fill="#555"/><rect x="763" y="587" width="1" height="1" fill="#555"/><rect x="763" y="591" width="1" height="1" fill="#555"/><rect x="763" y="595" width="1" height="1" fill="#555"/><rect x="763" y="599" width="1" height="1" fill="#555"/><rect x="570" y="35" width="220" height="2" fill="#7030a0"/><rect x="570" y="35" width="3" height="11" fill="#4a4a4a"/><rect x="787" y="35" width="3" height="11" fill="#4a4a4a"/><rect x="570" y="54" width="52" height="2" fill="#7030a0"/><rect x="570" y="54" width="3" height="11" fill="#4a4a4a"/><rect x="619" y="54" width="3" height="11" fill="#4a4a4a"/><rect x="571" y="73" width="25" height="11" fill="#8ab8ea"/><rect x="596" y="92" width="25" height="11" fill="#8ab8ea"/><rect x="619" y="130" width="75" height="2" fill="#7030a0"/><rect x="619" y="130" width="3" height="11" fill="#4a4a4a"/><rect x="691" y="130" width="3" height="11" fill="#4a4a4a"/><rect x="619" y="149" width="51" height="2" fill="#7030a0"/><rect x="619" y="149" width="3" height="11" fill="#4a4a4a"/><rect x="667" y="149" width="3" height="11" fill="#4a4a4a"/><rect x="620" y="168" width="25" height="11" fill="#8ab8ea"/><rect x="644" y="187" width="25" height="11" fill="#8ab8ea"/><rect x="667" y="206" width="25" height="11" fill="#8ab8ea"/><rect x="667" y="225" width="25" height="11" fill="#8ab8ea"/><rect x="667" y="244" width="25" height="11" fill="#8ab8ea"/><rect x="667" y="263" width="25" height="11" fill="#8ab8ea"/><rect x="667" y="301" width="25" height="11" fill="#8ab8ea"/><rect x="666" y="339" width="28" height="2" fill="#7030a0"/><rect x="666" y="339" width="3" height="11" fill="#4a4a4a"/><rect x="691" y="339" width="3" height="11" fill="#4a4a4a"/><rect x="667" y="358" width="25" height="11" fill="#8ab8ea"/><rect x="667" y="377" width="25" height="11" fill="#8ab8ea"/><rect x="667" y="396" width="25" height="11" fill="#8ab8ea"/><rect x="667" y="415" width="25" height="11" fill="#8ab8ea"/><rect x="667" y="434" width="25" height="11" fill="#8ab8ea"/><rect x="667" y="453" width="25" height="11" fill="#8ab8ea"/><rect x="667" y="472" width="25" height="11" fill="#8ab8ea"/><rect x="667" y="491" width="25" height="11" fill="#8ab8ea"/><rect x="667" y="510" width="25" height="11" fill="#8ab8ea"/><rect x="684" y="548" width="82" height="2" fill="#7030a0"/><rect x="684" y="548" width="3" height="11" fill="#4a4a4a"/><rect x="763" y="548" width="3" height="11" fill="#4a4a4a"/><rect x="740" y="567" width="25" height="11" fill="#8ab8ea"/><rect x="740" y="586" width="25" height="11" fill="#8ab8ea"/><rect x="596" y="78" width="6" height="1" fill="#8ab8ea"/><rect x="601" y="78" width="1" height="7" fill="#8ab8ea"/><polygon points="596,84 606,84 606,85.5 602,90 601,90 596,85.5" fill="#8ab8ea" shape-rendering="geometricPrecision"/><rect x="621" y="97" width="5" height="1" fill="#8ab8ea"/><rect x="625" y="97" width="1" height="7" fill="#8ab8ea"/><polygon points="620,103 630,103 630,104.5 626,109 625,109 620,104.5" fill="#8ab8ea" shape-rendering="geometricPrecision"/><rect x="645" y="173" width="5" height="1" fill="#8ab8ea"/><rect x="649" y="173" width="1" height="7" fill="#8ab8ea"/><polygon points="644,179 654,179 654,180.5 650,185 649,185 644,180.5" fill="#8ab8ea" shape-rendering="geometricPrecision"/><rect x="669" y="192" width="5" height="1" fill="#8ab8ea"/><rect x="673" y="192" width="1" height="7" fill="#8ab8ea"/><polygon points="668,198 678,198 678,199.5 674,204 673,204 668,199.5" fill="#8ab8ea" shape-rendering="geometricPrecision"/><rect x="673" y="217" width="1" height="1" fill="#8ab8ea"/><polygon points="668,217 678,217 678,218.5 674,223 673,223 668,218.5" fill="#8ab8ea" shape-rendering="geometricPrecision"/><rect x="673" y="236" width="1" height="1" fill="#8ab8ea"/><polygon points="668,236 678,236 678,237.5 674,242 673,242 668,237.5" fill="#8ab8ea" shape-rendering="geometricPrecision"/><rect x="673" y="255" width="1" height="1" fill="#8ab8ea"/><polygon points="668,255 678,255 678,256.5 674,261 673,261 668,256.5" fill="#8ab8ea" shape-rendering="geometricPrecision"/><rect x="673" y="274" width="1" height="20" fill="#8ab8ea"/><polygon points="668,293 678,293 678,294.5 674,299 673,299 668,294.5" fill="#8ab8ea" shape-rendering="geometricPrecision"/><rect x="673" y="312" width="1" height="1" fill="#8ab8ea"/><polygon points="668,312 678,312 678,313.5 674,318 673,318 668,313.5" fill="#8ab8ea" shape-rendering="geometricPrecision"/><rect x="692" y="515" width="6" height="1" fill="#8ab8ea"/><rect x="697" y="515" width="1" height="7" fill="#8ab8ea"/><polygon points="692,521 702,521 702,522.5 698,527 697,527 692,522.5" fill="#8ab8ea" shape-rendering="geometricPrecision"/><polygon points="619.80,111.00 621.20,111.00 622.00,115.00 626.00,115.00 626.00,116.20 623.00,118.30 624.20,121.90 622.40,121.90 620.50,120.00 618.60,121.90 616.80,121.90 618.00,118.30 615.00,116.20 615.00,115.00 619.00,115.00" fill="#c00000" shape-rendering="geometricPrecision"/><polygon points="666.80,320.00 668.20,320.00 669.00,324.00 673.00,324.00 673.00,325.20 670.00,327.30 671.20,330.90 669.40,330.90 667.50,329.00 665.60,330.90 663.80,330.90 665.00,327.30 662.00,325.20 662.00,324.00 666.00,324.00" fill="#c00000" shape-rendering="geometricPrecision"/><polygon points="691.30,529.00 692.70,529.00 693.50,533.00 697.50,533.00 697.50,534.20 694.50,536.30 695.70,539.90 693.90,539.90 692.00,538.00 690.10,539.90 688.30,539.90 689.50,536.30 686.50,534.20 686.50,533.00 690.50,533.00" fill="#c00000" shape-rendering="geometricPrecision"/><rect x="626" y="116" width="6" height="1" fill="#c00000"/><rect x="631" y="116" width="1" height="11" fill="#c00000"/><rect x="604" y="126" width="28" height="1" fill="#c00000"/><rect x="604" y="126" width="1" height="29" fill="#c00000"/><rect x="604" y="154" width="5" height="1" fill="#c00000"/><polygon points="608,149.5 615,154.5 608,159.5" fill="#c00000" shape-rendering="geometricPrecision"/><rect x="674" y="325" width="6" height="1" fill="#c00000"/><rect x="679" y="325" width="1" height="186" fill="#c00000"/><polygon points="674,350 684,350 684,351.5 680,356 679,356 674,351.5" fill="#c00000" shape-rendering="geometricPrecision"/><polygon points="674,369 684,369 684,370.5 680,375 679,375 674,370.5" fill="#c00000" shape-rendering="geometricPrecision"/><polygon points="674,388 684,388 684,389.5 680,394 679,394 674,389.5" fill="#c00000" shape-rendering="geometricPrecision"/><polygon points="674,407 684,407 684,408.5 680,413 679,413 674,408.5" fill="#c00000" shape-rendering="geometricPrecision"/><polygon points="674,426 684,426 684,427.5 680,432 679,432 674,427.5" fill="#c00000" shape-rendering="geometricPrecision"/><polygon points="674,445 684,445 684,446.5 680,451 679,451 674,446.5" fill="#c00000" shape-rendering="geometricPrecision"/><polygon points="674,464 684,464 684,465.5 680,470 679,470 674,465.5" fill="#c00000" shape-rendering="geometricPrecision"/><polygon points="674,483 684,483 684,484.5 680,489 679,489 674,484.5" fill="#c00000" shape-rendering="geometricPrecision"/><polygon points="674,502 684,502 684,503.5 680,508 679,508 674,503.5" fill="#c00000" shape-rendering="geometricPrecision"/><polygon points="674,350 684,350 684,351.5 680,356 679,356 674,351.5" fill="#c00000" shape-rendering="geometricPrecision"/><rect x="697" y="534" width="49" height="1" fill="#c00000"/><rect x="745" y="534" width="1" height="67" fill="#c00000"/><rect x="703" y="534" width="1" height="11" fill="#c00000"/><rect x="676" y="544" width="28" height="1" fill="#c00000"/><rect x="676" y="544" width="1" height="57" fill="#c00000"/><polygon points="740,559 750,559 750,560.5 746,565 745,565 740,560.5" fill="#c00000" shape-rendering="geometricPrecision"/><polygon points="740,578 750,578 750,579.5 746,584 745,584 740,579.5" fill="#c00000" shape-rendering="geometricPrecision"/><polygon points="740,597 750,597 750,598.5 746,603 745,603 740,598.5" fill="#c00000" shape-rendering="geometricPrecision"/></svg>
<div class="t" style="left:632px;top:108px;font-weight:bold;font-size:13.6px;letter-spacing:0.7px">8/4</div>
<div class="t" style="left:680px;top:317px;font-weight:bold;font-size:13.6px;letter-spacing:0.7px">8/6</div>
<div class="t" style="left:704px;top:526px;font-weight:bold;font-size:13.6px;letter-spacing:0.7px">8/7</div>
</body></html>
